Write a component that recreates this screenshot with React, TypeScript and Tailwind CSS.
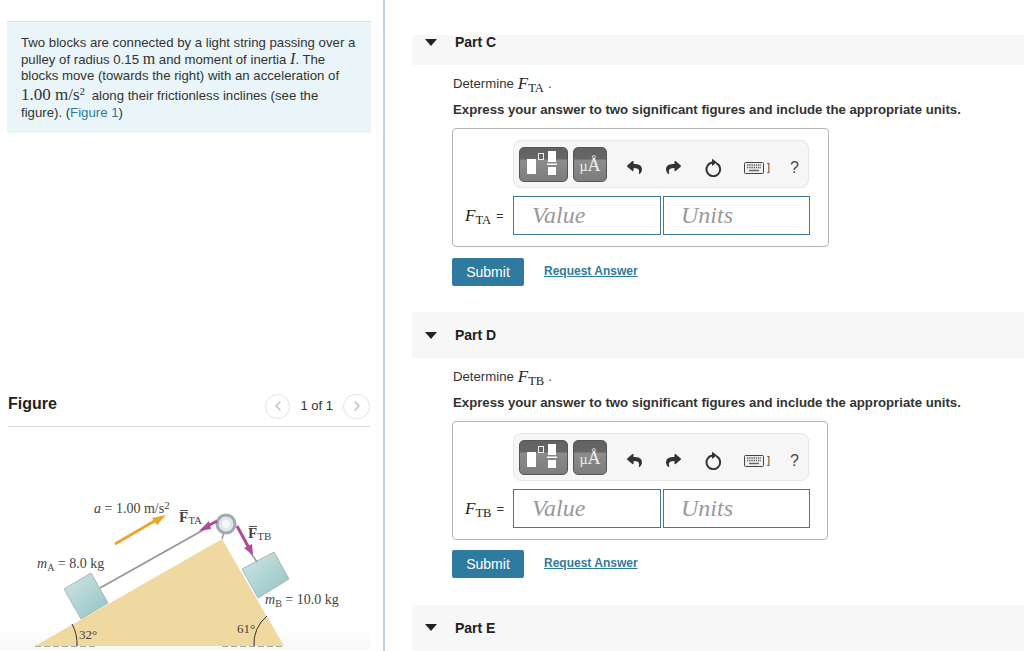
import React from 'react';
import { FaReply, FaShare } from 'react-icons/fa';
import { ChevronLeft, ChevronRight } from 'lucide-react';

const serif = "font-['Liberation_Serif',serif]";
const btnBg = 'bg-[linear-gradient(#626262_0%,#666_32%,#8c8c8c_38%,#7c7c7c_100%)]';

function Sub({ name, sub }: { name: string; sub: string }) {
  return (
    <span className={`${serif} text-[17px] text-[#222]`}>
      <i>{name}</i>
      <span className="text-[12.5px] relative top-[3px]">{sub}</span>
    </span>
  );
}

function Toolbar() {
  return (
    <div className="h-[48px] w-[296px] ml-[60px] rounded-[8px] border border-[#e6e6e6] bg-[#f6f6f6] flex items-center pl-[5px]">
      <div className={`w-[49px] h-[35px] rounded-[5px] border border-[#555] ${btnBg}`}>
        <svg width="47" height="33" viewBox="0 0 47 33">
          <rect x="7" y="11" width="9" height="15" fill="#fff" />
          <rect x="18.5" y="5.5" width="5" height="6" fill="none" stroke="#eee" />
          <rect x="28" y="3" width="8" height="11" fill="#fff" />
          <rect x="27" y="15.5" width="10" height="1.5" fill="#fff" />
          <rect x="28" y="19" width="8" height="8" fill="#fff" />
        </svg>
      </div>
      <div className={`ml-[5px] w-[34px] h-[35px] rounded-[5px] border border-[#555] ${btnBg} text-[#eee] leading-[34px] text-center ${serif}`}>
        <span className="text-[14px]">µ</span>
        <span className="text-[18px]">Å</span>
      </div>
      <div className="flex items-center pt-[7px]">
        <FaReply size={15} className="ml-[20px] text-[#333]" />
        <FaShare size={15} className="ml-[24px] text-[#333]" />
        <svg className="ml-[23px]" width="18" height="19" viewBox="0 0 18 19">
          <path d="M12.2 5.2A6.8 6.8 0 1 1 8.5 4.6" fill="none" stroke="#333" strokeWidth="2" />
          <path d="M8 0.8L13 4.3L8 8Z" fill="#333" />
        </svg>
        <svg className="ml-[22px]" width="20" height="12" viewBox="0 0 20 12">
          <rect x="0.5" y="0.5" width="19" height="11" rx="1" fill="#eee" stroke="#444" />
          <path d="M3 3h14M3 5.5h14" stroke="#666" strokeWidth="1.4" strokeDasharray="1.4 0.8" />
          <path d="M5 8.5h10" stroke="#666" strokeWidth="1.4" />
        </svg>
        <span className="ml-[3px] text-[11px] text-[#444]">]</span>
        <span className="ml-[20px] text-[16px] text-[#444]">?</span>
      </div>
    </div>
  );
}

function AnswerPart({ title, sym, headerClass, boxWidth, submitGap }: { title: string; sym: string; headerClass: string; boxWidth: string; submitGap: string }) {
  return (
    <>
      <div className={`bg-[#f7f7f7] pl-[43px] font-bold text-[14px] text-[#222] ${headerClass}`}>{title}</div>
      <div className="pl-[40px]">
        <div className="mt-[7px] pl-[1px] h-[24px] flex items-center text-[13.2px] text-[#333] gap-[4px]">
          Determine <Sub name="F" sub={sym} /><span>.</span>
        </div>
        <div className="mt-[4px] pl-[1px] h-[20px] leading-[20px] font-bold text-[13.2px] text-[#333]">
          Express your answer to two significant figures and include the appropriate units.
        </div>
        <div className={`mt-[8px] h-[119px] ${boxWidth} rounded-[4px] border border-[#b5b5b5] pt-[11px]`}>
          <Toolbar />
          <div className="mt-[8px] flex items-center">
            <div className="w-[60px] pl-[12px] flex items-center gap-[5px] text-[13px] text-[#333]">
              <Sub name="F" sub={sym} /><span>=</span>
            </div>
            <div className={`h-[39px] w-[148px] border border-[#3f7a99] pl-[18px] text-[24px] leading-[37px] italic text-[#999] ${serif}`}>Value</div>
            <div className={`ml-[2px] h-[39px] w-[147px] border border-[#3f7a99] pl-[17px] text-[24px] leading-[37px] italic text-[#999] ${serif}`}>Units</div>
          </div>
        </div>
        <div className={`${submitGap} flex items-start`}>
          <div className="w-[72px] h-[28px] rounded-[2px] bg-[#2f7b9f] text-white text-[14px] leading-[28px] text-center">Submit</div>
          <div className="ml-[20px] leading-[26px] text-[12px] font-bold text-[#2f7b9f] underline">Request Answer</div>
        </div>
      </div>
    </>
  );
}

function Caret({ className }: { className: string }) {
  return (
    <svg className={`absolute left-[40px] ${className}`} width="12" height="7" viewBox="0 0 12 7">
      <path d="M0 0h12L6 7z" fill="#222" />
    </svg>
  );
}

function Diagram() {
  return (
    <svg className="block" width="370" height="223" viewBox="0 428 370 223">
      <defs>
        <linearGradient id="blockFill" x1="0" y1="0" x2="1" y2="1">
          <stop offset="0" stopColor="#d3e6e6" />
          <stop offset="1" stopColor="#8fc2c2" />
        </linearGradient>
        <linearGradient id="fade" x1="0" y1="0" x2="0" y2="1">
          <stop offset="0" stopColor="#ffffff" />
          <stop offset="1" stopColor="#f8f8f8" />
        </linearGradient>
      </defs>
      <rect x="0" y="625" width="370" height="26" fill="url(#fade)" />
      <path d="M35 647L222 540L284 647Z" fill="#efd9a0" />
      <path d="M64 590L91 574L108 604L81 620Z" fill="url(#blockFill)" stroke="#a9b8b8" />
      <path d="M242 570L274 553L289 580L258 599Z" fill="url(#blockFill)" stroke="#a9b8b8" />
      <path d="M100 589L205 530" stroke="#999" strokeWidth="2" />
      <path d="M222 540L226 526M248 550L257 563" stroke="#999" strokeWidth="1.5" fill="none" />
      <circle cx="226" cy="525" r="9" fill="#dce8ec" stroke="#a3a9ad" strokeWidth="3" />
      <circle cx="226" cy="525" r="4" fill="#f4f8f9" />
      <path d="M217 522L206 528" stroke="#b04a9a" strokeWidth="3" />
      <path d="M199 532L209 522L211 530Z" fill="#b04a9a" />
      <path d="M237 527L249 549" stroke="#b04a9a" strokeWidth="3" />
      <path d="M253 556L244 549L252 545Z" fill="#b04a9a" />
      <path d="M115 545L158 520" stroke="#eca52f" strokeWidth="3" />
      <path d="M166 516L152 519L157 526Z" fill="#eca52f" />
      <path d="M72 625A42 42 0 0 1 77 647" fill="none" stroke="#333" />
      <path d="M267 617A35 35 0 0 0 254 647" fill="none" stroke="#333" />
      <path d="M35 647.5H96M222 647.5H284" stroke="#aaa" strokeDasharray="6 3" />
      <path d="M180 511.5h8M249 527.5h8" stroke="#555" strokeWidth="1" />
      <g fontFamily="Liberation Serif, serif" fontSize="14" fill="#444">
        <text x="94" y="514"><tspan fontStyle="italic">a</tspan> = 1.00 m/s<tspan dy="-4" fontSize="11">2</tspan></text>
        <text x="37" y="569"><tspan fontStyle="italic">m</tspan><tspan dy="3" fontSize="10">A</tspan><tspan dy="-3"> = 8.0 kg</tspan></text>
        <text x="265" y="605"><tspan fontStyle="italic">m</tspan><tspan dy="3" fontSize="10">B</tspan><tspan dy="-3"> = 10.0 kg</tspan></text>
        <text x="79" y="640" fontSize="13">32°</text>
        <text x="237" y="634" fontSize="13">61°</text>
        <text x="179" y="523" fontWeight="bold" fontSize="15">F<tspan dy="2" fontSize="11" fontWeight="normal">TA</tspan></text>
        <text x="248" y="539" fontWeight="bold" fontSize="15">F<tspan dy="2" fontSize="11" fontWeight="normal">TB</tspan></text>
      </g>
    </svg>
  );
}

export default function App() {
  return (
    <div className="relative h-[651px] w-[1024px] overflow-hidden bg-white flex font-['Liberation_Sans',Arial,sans-serif]">
      <div className="w-[385px] shrink-0 border-r-2 border-[#c3d1e2] pt-[21px]">
        <div className="ml-[7px] w-[364px] h-[112px] bg-[#e9f5f8] border-t border-[#d5e2e6] pl-[14px] pr-[10px] pt-[13px] text-[13.2px] leading-[16px] text-[#333]">
          Two blocks are connected by a light string passing over a pulley of radius 0.15 <span className={`${serif} text-[16px]`}>m</span> and moment of inertia <i className={`${serif} text-[16px]`}>I</i>. The blocks move (towards the right) with an acceleration of
          <div className="mt-[3px] mb-[1px]">
            <span className={`${serif} text-[17px] mr-[3px]`}>1.00 m/s<sup className="text-[11px] leading-none">2</sup></span> along their frictionless inclines (see the
          </div>
          figure). (<span className="text-[#2f7b9f]">Figure 1</span>)
        </div>
        <div className="mt-[262px] ml-[8px] w-[362px] h-[32px] pb-[9px] border-b border-[#dcdcdc] flex items-center">
          <span className="font-bold text-[16px] text-[#222] mb-[4px]">Figure</span>
          <div className="ml-auto flex items-center text-[13px] text-[#333]">
            <span className="w-[25px] h-[25px] rounded-full border border-[#e3e3e3] flex items-center justify-center text-[#bbb]">
              <ChevronLeft size={16} />
            </span>
            <span className="mx-[10px]">1 of 1</span>
            <span className="w-[27px] h-[25px] rounded-full border border-[#e3e3e3] flex items-center justify-center text-[#bbb]">
              <ChevronRight size={16} />
            </span>
          </div>
        </div>
        <Diagram />
      </div>
      <div className="flex-1 pl-[27px] pt-[35px] relative">
        <Caret className="top-[39px]" />
        <AnswerPart title="Part C" sym="TA" headerClass="h-[30px] leading-[14px]" boxWidth="w-[377px]" submitGap="mt-[11px]" />
        <div className="h-[26px]" />
        <Caret className="top-[332px]" />
        <AnswerPart title="Part D" sym="TB" headerClass="h-[46px] leading-[46px]" boxWidth="w-[376px]" submitGap="mt-[10px]" />
        <div className="h-[27px]" />
        <Caret className="top-[624px]" />
        <div className="bg-[#f7f7f7] pl-[43px] h-[46px] leading-[46px] font-bold text-[14px] text-[#222]">Part E</div>
      </div>
    </div>
  );
}
